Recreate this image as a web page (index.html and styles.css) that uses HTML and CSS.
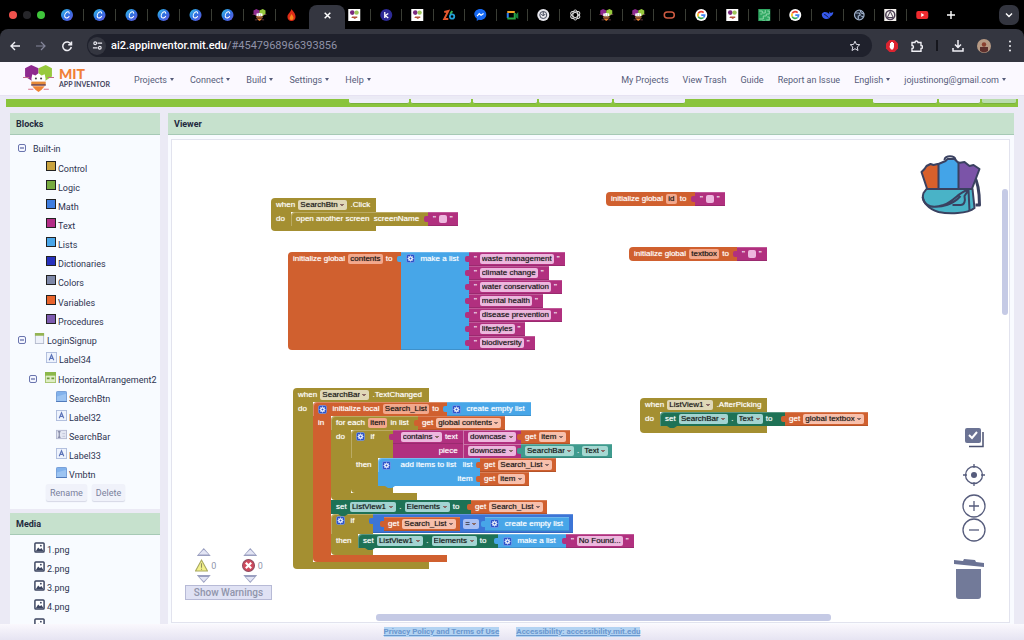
FILE: index.html
```html
<!DOCTYPE html>
<html lang="en">
<head>
<meta charset="utf-8">
<title>MIT App Inventor</title>
<link rel="stylesheet" href="styles.css">
</head>
<body>
<svg class="defs" aria-hidden="true">
  <defs>
    <linearGradient id="cg" x1="0" y1="0" x2="1" y2="1"><stop offset="0" stop-color="#38c6e8"/><stop offset=".5" stop-color="#2f6fe0"/><stop offset="1" stop-color="#6a5be0"/></linearGradient>
    <symbol id="canva" viewBox="0 0 12 12"><circle cx="6" cy="6" r="6" fill="url(#cg)"/><path d="M8.2 4.2C8.2 2.6 6.6 2.4 5.4 3.4 4 4.6 3.2 7 4.2 8.4 5.2 9.6 7.2 8.8 8 7.4" fill="none" stroke="#fff" stroke-width="1.1" stroke-linecap="round"/></symbol>
    <symbol id="bee" viewBox="0 0 30 26"><path d="M8 0l7 3v8l-7 4-6-4V3z" fill="#8e2a8f"/><path d="M22 0l6 3v8l-6 4-7-4V3z" fill="#97c93d"/><path d="M0 12h6M24 12h6" stroke="#c06a8a" stroke-width="1"/><path d="M9 9l3 1 3-2 3 2 3-1 1 5-3 2H11l-3-2z" fill="#fff"/><path d="M8 16h14v3H8z" fill="#e58a3a"/><path d="M8 18.500h14v1.500H8z" fill="#6b3f49"/><path d="M9 20.500h12L18 24l-3 2-3-2z" fill="#ee8434"/><path d="M5 23.500h5M25 23.500h-5" stroke="#d9738a" stroke-width="1"/><circle cx="12.500" cy="13" r="1" fill="#444"/><circle cx="17.500" cy="13" r="1" fill="#444"/></symbol>
    <symbol id="beesq" viewBox="0 0 12 12"><path d="M0 0h12v12H0z" fill="#fff"/><circle cx="4" cy="3.600" r="2.300" fill="#7b2a80"/><circle cx="8.300" cy="3.600" r="2.200" fill="#9fc65a"/><path d="M4 7.500h5v1.500H8L6.500 10 5 9H3z" fill="#b5533b"/></symbol>
    <symbol id="flame" viewBox="0 0 12 12"><path d="M6 0c1 2 4 4 4 7.500A4 4 0 0 1 6 12a4 4 0 0 1-4-4.500C2 5 5.500 3 6 0z" fill="#dd2c16"/><path d="M6 5c1 1.500 2 2.500 2 4a2 2 0 0 1-4 0z" fill="#f5891f"/></symbol>
    <symbol id="kk" viewBox="0 0 12 12"><circle cx="6" cy="6" r="6" fill="#2d2a96"/><path d="M4.500 3v6M8 4.500L5 6.500 8 9" fill="none" stroke="#fff" stroke-width="1.300"/></symbol>
    <symbol id="two6" viewBox="0 0 12 12"><path d="M1 3l4-1-4 8h4" fill="none" stroke="#e4572e" stroke-width="2"/><path d="M9 2L7 5" stroke="#37b35a" stroke-width="2"/><circle cx="8.800" cy="7.500" r="2.200" fill="none" stroke="#23a0d8" stroke-width="1.800"/></symbol>
    <symbol id="msgr" viewBox="0 0 12 12"><path d="M6 0c3.500 0 6 2.400 6 5.500S9.500 11 6 11l-1.500-.2L2.500 12V9.500A5.300 5.300 0 0 1 0 5.500C0 2.400 2.500 0 6 0z" fill="#1568f2"/><path d="M2.800 7.200L5 4.700l1.800 1.600 2.500-1.800" fill="none" stroke="#fff" stroke-width="1.200"/></symbol>
    <symbol id="meet" viewBox="0 0 12 12"><path d="M1.500 4v5" fill="none" stroke="#2f7ff0" stroke-width="2"/><path d="M1 3h7.500" fill="none" stroke="#f3a52a" stroke-width="2"/><path d="M1 9.500h7.500V4" fill="none" stroke="#28a745" stroke-width="2"/><path d="M9 6l3-3v7L9 8z" fill="#15803d"/></symbol>
    <symbol id="ring" viewBox="0 0 12 12"><circle cx="6" cy="6" r="6" fill="#e8e8ee"/><circle cx="6" cy="6" r="3.500" fill="none" stroke="#444a5c"/><path d="M6 2.500v4M4 5l2 2 2-2" stroke="#444a5c" fill="none"/></symbol>
    <symbol id="oai" viewBox="0 0 12 12"><g fill="none" stroke="#ddd" stroke-width="1"><ellipse cx="6" cy="6" rx="2.400" ry="5"/><ellipse cx="6" cy="6" rx="2.400" ry="5" transform="rotate(60 6 6)"/><ellipse cx="6" cy="6" rx="2.400" ry="5" transform="rotate(120 6 6)"/></g></symbol>
    <symbol id="orac" viewBox="0 0 12 12"><rect x="1" y="3" width="10" height="6" rx="3" fill="none" stroke="#cf5b42" stroke-width="1.500"/></symbol>
    <symbol id="goog" viewBox="0 0 12 12"><circle cx="6" cy="6" r="6" fill="#fff"/><g fill="none" stroke-width="1.600"><path d="M8.400 3.600A3.400 3.400 0 0 0 3 4.400" stroke="#ea4335"/><path d="M3 4.400a3.400 3.400 0 0 0 0 3.200" stroke="#fbbc05"/><path d="M3 7.600a3.400 3.400 0 0 0 5.300.9" stroke="#34a853"/><path d="M6 6.100h3.400a3.400 3.400 0 0 1-1.100 2.400" stroke="#4285f4"/></g></symbol>
    <symbol id="grn" viewBox="0 0 12 12"><path d="M0 0h12v12H0z" fill="#2fa862"/><path d="M1 2h3v2h3V1m2 1h2v3H8v2H5v3H1m1-5h2m5 3h2v3H8m-4 1h3" stroke="#8ed6a8" fill="none"/></symbol>
    <symbol id="whale" viewBox="0 0 12 12"><path d="M.5 5C.5 8 2.500 10 5.500 10c2 0 3-1 3.500-2.500C11 7 12 5 12 3L9.500 4 8 2.500V5C6 3 2.500 2 .5 5z" fill="#3558e8"/><path d="M3 5.500C5 6 6 7.500 7 8.500" stroke="#0a0f2a" fill="none"/></symbol>
    <symbol id="globe" viewBox="0 0 12 12"><circle cx="6" cy="6" r="4.800" fill="#1b2433" stroke="#9fb0c9" stroke-width="1.200"/><path d="M2 4h4l1 2-2 1v3M7 2l1 2 3 1M8 7l2 1" stroke="#9fb0c9" stroke-width="1.200" fill="none"/></symbol>
    <symbol id="tri" viewBox="0 0 12 12"><path d="M0 0h12v12H0z" fill="#f4f1ee"/><circle cx="6" cy="6" r="4.500" fill="none" stroke="#4a3d52" stroke-width="1.500"/><path d="M6 2.500L3 8.500h6z" fill="none" stroke="#4a3d52"/></symbol>
    <symbol id="yt" viewBox="0 0 12 12"><rect y="2" width="12" height="8" rx="2" fill="#ef2a2e"/><path d="M5 4l3 2-3 2z" fill="#fff"/></symbol>
    <symbol id="gear" viewBox="0 0 9 9"><rect x=".5" y=".5" width="8" height="8" rx="1.500" fill="#2a51c9" stroke="#7fa5f0" stroke-width=".6"/><circle cx="4.500" cy="4.500" r="1.700" fill="none" stroke="#fff" stroke-width="1.300"/><path d="M4.500 1.500v1M4.500 6.500v1M1.500 4.500h1M6.500 4.500h1M2.400 2.400l.7.700M5.900 5.900l.7.700M6.600 2.400l-.7.700M3.100 5.900l-.7.700" stroke="#fff" stroke-width=".8"/></symbol>
    <symbol id="minus" viewBox="0 0 8 8"><rect x=".5" y=".5" width="7" height="7" rx="1.500" fill="#f4f6ff" stroke="#6a75ae"/><path d="M2 4h4" stroke="#3d4a90"/></symbol>
    <symbol id="lab" viewBox="0 0 12 12"><rect x=".5" y=".5" width="11" height="11" fill="#eef3fd" stroke="#aebbdc"/><path d="M3.500 9L6 3l2.500 6M4.500 7h3" fill="none" stroke="#5a72b8" stroke-width="1.200"/></symbol>
    <symbol id="btn" viewBox="0 0 12 12"><rect x=".5" y=".5" width="11" height="10.500" rx="1" fill="#82b2ec" stroke="#6f98d4"/><path d="M1 11V6l10-3v8z" fill="#9cc4f2"/><path d="M0 11.500h12" stroke="#4471b5"/></symbol>
    <symbol id="tbx" viewBox="0 0 12 12"><rect x=".5" y="1.500" width="11" height="9" fill="#e3e6f2" stroke="#b3b8d0"/><path d="M2 3h3M3.500 3v6M2 9h3" stroke="#6b7090" fill="none"/><path d="M7 5h3M7 8h3" stroke="#c0c4d8"/></symbol>
    <symbol id="scr" viewBox="0 0 10 12"><rect x=".5" y="1" width="9" height="10.500" fill="#eef1fa" stroke="#b4bacc"/><path d="M0 0h10v3H0z" fill="#94b453"/></symbol>
    <symbol id="har" viewBox="0 0 12 12"><rect x=".5" y=".5" width="11" height="11" fill="#dfeec5" stroke="#a5c46c"/><path d="M0 0h12v4H0z" fill="#8cb84a"/><path d="M2 6h3v2H2zM7 6h3v2H7z" fill="#6f9a3a"/></symbol>
    <symbol id="pic" viewBox="0 0 12 12"><rect x="1" y="1" width="10" height="10" rx="1" fill="#fff" stroke="#3b4460" stroke-width="1.600"/><path d="M2 10l2.500-4 2 2L8 6.500 10.500 10z" fill="#3b4460"/><circle cx="7.500" cy="4" r="1" fill="#3b4460"/></symbol>
  </defs>
</svg>

<div class="browser">
  <div class="tabs">
    <div class="lights"><i class="red"></i><i class="dim"></i><i class="green"></i></div>
    <div class="pinned">
      <svg><use href="#canva"/></svg><svg><use href="#canva"/></svg><svg><use href="#canva"/></svg><svg><use href="#canva"/></svg><svg><use href="#canva"/></svg><svg><use href="#canva"/></svg><svg><use href="#bee"/></svg><svg><use href="#flame"/></svg>
    </div>
    <div class="active-tab"><button aria-label="Close tab"><svg viewBox="0 0 8 8"><path d="M1.500 1.500l5 5M6.500 1.500l-5 5" stroke="#fff" stroke-width="1.300"/></svg></button></div>
    <div class="others">
      <svg><use href="#beesq"/></svg><svg><use href="#kk"/></svg><svg><use href="#beesq"/></svg><svg><use href="#two6"/></svg><svg><use href="#msgr"/></svg><svg><use href="#meet"/></svg><svg><use href="#ring"/></svg><svg><use href="#oai"/></svg><svg><use href="#bee"/></svg><svg><use href="#bee"/></svg><svg><use href="#orac"/></svg><svg><use href="#goog"/></svg><svg><use href="#beesq"/></svg><svg><use href="#grn"/></svg><svg><use href="#goog"/></svg><svg><use href="#whale"/></svg><svg><use href="#globe"/></svg><svg><use href="#tri"/></svg><svg><use href="#yt"/></svg>
    </div>
    <button class="newtab" aria-label="New tab"><svg viewBox="0 0 10 10"><path d="M5 1v8M1 5h8" stroke="#fff" stroke-width="1.400"/></svg></button>
    <button class="chev" aria-label="Search tabs"><svg viewBox="0 0 10 10"><path d="M2 3.500l3 3 3-3" fill="none" stroke="#fff" stroke-width="1.400"/></svg></button>
  </div>
  <div class="toolbar">
    <button aria-label="Back"><svg viewBox="0 0 12 12"><path d="M11 6H2M6 2L2 6l4 4" fill="none" stroke="#f0f0f5" stroke-width="1.400"/></svg></button>
    <button aria-label="Forward"><svg viewBox="0 0 12 12"><path d="M1 6h9M6 2l4 4-4 4" fill="none" stroke="#84869a" stroke-width="1.200"/></svg></button>
    <button aria-label="Reload"><svg viewBox="0 0 12 12"><path d="M10 4.500A4.300 4.300 0 1 0 10.300 7M10.500 1.500v3.300H7.200" fill="none" stroke="#f0f0f5" stroke-width="1.500"/></svg></button>
    <div class="omnibox">
      <span class="tune"><svg viewBox="0 0 12 12"><g fill="none" stroke="#e8e8ee" stroke-width="1.300"><circle cx="3.500" cy="3.500" r="1.500"/><path d="M6 3.500h5M1 8.500h5"/><circle cx="8.500" cy="8.500" r="1.500"/></g></svg></span>
      <span class="url"><b>ai2.appinventor.mit.edu</b>/#4547968966393856</span>
      <button aria-label="Bookmark"><svg viewBox="0 0 12 12"><path d="M6 1.200l1.400 3.200 3.400.3-2.600 2.300.8 3.500L6 8.700l-3 1.800.8-3.500L1.200 4.700l3.400-.3z" fill="none" stroke="#dcdce6" stroke-width="1"/></svg></button>
    </div>
    <button aria-label="Ad blocker"><svg viewBox="0 0 12 12"><path d="M3.500 0h5L12 3.500v5L8.500 12h-5L0 8.500v-5z" fill="#dc2430"/><path d="M4 5v-2h1v-1h2v1h1v4L7 9.500H5L3.500 7z" fill="#fff"/></svg></button>
    <button aria-label="Extensions"><svg viewBox="0 0 12 12"><path d="M1 2.500h3a1.500 1.500 0 0 1 3 0h3v3a1.500 1.500 0 0 1 0 3v2.700H1V8.500a1.500 1.500 0 0 0 0-3z" fill="none" stroke="#f0f0f5" stroke-width="1.400"/></svg></button>
    <i class="sep"></i>
    <button aria-label="Downloads"><svg viewBox="0 0 12 12"><path d="M6 0v7M3 4.500l3 3 3-3M1 8v3h10V8" fill="none" stroke="#f0f0f5" stroke-width="1.500"/></svg></button>
    <button aria-label="Profile"><svg class="big" viewBox="0 0 14 14"><circle cx="7" cy="7" r="7" fill="#b79a84"/><path d="M3 8h8v4a7 7 0 0 1-8 0z" fill="#5d2f2c"/><circle cx="7" cy="5.500" r="2.200" fill="#8a4030"/></svg></button>
    <button aria-label="Menu"><svg viewBox="0 0 12 12"><g fill="#f0f0f5"><circle cx="6" cy="1.500" r="1"/><circle cx="6" cy="6" r="1"/><circle cx="6" cy="10.500" r="1"/></g></svg></button>
  </div>
</div>

<header class="top">
  <a class="logo" href="#"><svg><use href="#bee"/></svg><span><b>MIT</b><small>APP INVENTOR</small></span></a>
  <nav class="menu">
    <button class="dd">Projects</button><button class="dd">Connect</button><button class="dd">Build</button><button class="dd">Settings</button><button class="dd">Help</button>
  </nav>
  <nav class="links">
    <a href="#">My Projects</a><a href="#">View Trash</a><a href="#">Guide</a><a href="#">Report an Issue</a><button class="dd">English</button><button class="dd">jojustinong@gmail.com</button>
  </nav>
</header>

<div class="greenbar">
  <div class="seg left"><i class="s60"></i><i class="s60"></i><i class="s64"></i><i class="s73"></i><i class="s70"></i></div>
  <div class="seg"><i class="s64"></i><i class="s40"></i><i class="s34 on"></i></div>
</div>

<main>
  <aside>
    <section class="panel">
      <h2>Blocks</h2>
      <ul class="tree">
        <li class="l0 root"><svg class="tog"><use href="#minus"/></svg><span class="plain">Built-in</span></li>
        <li class="l1 first"><i class="sw" style="background:#c9a33f"></i><span>Control</span></li>
        <li class="l1"><i class="sw" style="background:#77ab41"></i><span>Logic</span></li>
        <li class="l1"><i class="sw" style="background:#3f7de0"></i><span>Math</span></li>
        <li class="l1"><i class="sw" style="background:#b32d87"></i><span>Text</span></li>
        <li class="l1"><i class="sw" style="background:#49a6e9"></i><span>Lists</span></li>
        <li class="l1"><i class="sw" style="background:#2630bd"></i><span>Dictionaries</span></li>
        <li class="l1"><i class="sw" style="background:#7e88a8"></i><span>Colors</span></li>
        <li class="l1 first"><i class="sw" style="background:#e8642c"></i><span>Variables</span></li>
        <li class="l1"><i class="sw" style="background:#7d5bb0"></i><span>Procedures</span></li>
        <li class="l0"><svg class="tog"><use href="#minus"/></svg><svg class="ic"><use href="#scr"/></svg><span>LoginSignup</span></li>
        <li class="l1"><svg class="ic"><use href="#lab"/></svg><span>Label34</span></li>
        <li class="lh first"><svg class="tog"><use href="#minus"/></svg><svg class="ic"><use href="#har"/></svg><span>HorizontalArrangement2</span></li>
        <li class="l2"><svg class="ic"><use href="#btn"/></svg><span>SearchBtn</span></li>
        <li class="l2"><svg class="ic"><use href="#lab"/></svg><span>Label32</span></li>
        <li class="l2"><svg class="ic"><use href="#tbx"/></svg><span>SearchBar</span></li>
        <li class="l2"><svg class="ic"><use href="#lab"/></svg><span>Label33</span></li>
        <li class="l2"><svg class="ic"><use href="#btn"/></svg><span>Vmbtn</span></li>
      </ul>
      <div class="acts"><button>Rename</button><button>Delete</button></div>
    </section>
    <section class="panel media">
      <h2>Media</h2>
      <ul class="tree">
        <li><svg class="ic"><use href="#pic"/></svg><span>1.png</span></li>
        <li><svg class="ic"><use href="#pic"/></svg><span>2.png</span></li>
        <li><svg class="ic"><use href="#pic"/></svg><span>3.png</span></li>
        <li><svg class="ic"><use href="#pic"/></svg><span>4.png</span></li>
        <li><svg class="ic"><use href="#pic"/></svg></li>
      </ul>
    </section>
  </aside>

  <section class="viewer">
    <h2>Viewer</h2>
    <div class="canvas">

      <div class="stack short" style="left:99px;top:58px;--w:105px">
        <div class="cell event head">when <select aria-label="Component"><option>SearchBtn</option></select> .Click</div>
        <div class="line"><div class="arm event w20">do</div>
          <div class="cell event nest" style="--w:137px">open another screen&nbsp; screenName</div>
          <div class="cell text val empty">"<input aria-label="Screen name">"</div></div>
        <div class="foot event"></div>
      </div>

      <div class="stack one" style="left:116px;top:112px">
        <div class="line"><div class="cell vars tall round" style="--w:113px">initialize global <input class="name" aria-label="Name" value="contents"> to</div>
          <div class="cell lists tall val" style="--w:68px"><svg class="gear"><use href="#gear"/></svg>  make a list</div>
          <div class="col">
            <div class="cell text val">"<input aria-label="Text" value="waste management">"</div>
            <div class="cell text val">"<input aria-label="Text" value="climate change">"</div>
            <div class="cell text val">"<input aria-label="Text" value="water conservation">"</div>
            <div class="cell text val">"<input aria-label="Text" value="mental health">"</div>
            <div class="cell text val">"<input aria-label="Text" value="disease prevention">"</div>
            <div class="cell text val">"<input aria-label="Text" value="lifestyles">"</div>
            <div class="cell text val">"<input aria-label="Text" value="biodiversity">"</div>
          </div></div>
      </div>

      <div class="stack one" style="left:434px;top:52px">
        <div class="line"><div class="cell vars round" style="--w:89px">initialize global <input class="name" aria-label="Name" value="id"> to</div><div class="cell text val empty">"<input aria-label="Text">"</div></div>
      </div>

      <div class="stack one" style="left:457px;top:107px">
        <div class="line"><div class="cell vars round" style="--w:108px">initialize global <input class="name" aria-label="Name" value="textbox"> to</div><div class="cell text val empty">"<input aria-label="Text">"</div></div>
      </div>

      <div class="stack" style="left:121px;top:248px;--w:136px">
        <div class="cell event head">when <select aria-label="Component"><option>SearchBar</option></select> .TextChanged</div>
        <div class="line"><div class="arm event w20">do</div>
          <div class="sub" style="--w:134px">
            <div class="line"><div class="cell vars nest" style="--w:134px"><svg class="gear"><use href="#gear"/></svg>  initialize local <input class="name" aria-label="Name" value="Search_List"> to</div><div class="cell lists val" style="--w:84px"><svg class="gear"><use href="#gear"/></svg>  create empty list</div></div>
            <div class="line"><div class="arm vars w18">in</div>
              <div class="col">
                <div class="sub" style="--w:86px">
                  <div class="line"><div class="cell event nest" style="--w:87px">for each <input class="name" aria-label="Name" value="item"> in list</div><div class="cell vars val">get <select aria-label="Variable"><option>global contents</option></select></div></div>
                  <div class="line"><div class="arm event w20">do</div>
                    <div class="sub" style="--w:42px">
                      <div class="line"><div class="cell event nest tall" style="--w:42px"><svg class="gear"><use href="#gear"/></svg>  if</div>
                        <div class="col">
                          <div class="line"><div class="cell text right val" style="--w:70px"><select aria-label="Operation"><option>contains</option></select> text </div><div class="cell text val edge" style="--w:58px"><select aria-label="Case"><option>downcase</option></select></div><div class="cell vars val">get <select aria-label="Variable"><option>item</option></select></div></div>
                          <div class="line"><div class="cell text right" style="--w:70px">piece </div><div class="cell text val edge" style="--w:58px"><select aria-label="Case"><option>downcase</option></select></div><div class="cell getter val"><select aria-label="Component"><option>SearchBar</option></select>.<select aria-label="Property"><option>Text</option></select></div></div>
                        </div></div>
                      <div class="line"><div class="arm event w27">then</div>
                        <div class="col notch lists-n">
                          <div class="line"><div class="cell lists right nest" style="--w:102px"><svg class="gear"><use href="#gear"/></svg>add items to list &nbsp; list  </div><div class="cell vars val">get <select aria-label="Variable"><option>Search_List</option></select></div></div>
                          <div class="line"><div class="cell lists right" style="--w:102px">item  </div><div class="cell vars val">get <select aria-label="Variable"><option>item</option></select></div></div>
                        </div></div>
                      <div class="foot event"></div>
                    </div></div>
                  <div class="foot event"></div>
                </div>
                <div class="line"><div class="cell set notch" style="--w:140px">set <select aria-label="Component"><option>ListView1</option></select> . <select aria-label="Property"><option>Elements</option></select> to</div><div class="cell vars val">get <select aria-label="Variable"><option>Search_List</option></select></div></div>
                <div class="sub" style="--w:42px">
                  <div class="line"><div class="cell event nest tall" style="--w:42px"><svg class="gear"><use href="#gear"/></svg>  if</div>
                    <div class="math val compare"><div class="cell vars val">get <select aria-label="Variable"><option>Search_List</option></select></div><select aria-label="Comparison"><option>=</option></select><div class="cell lists val" style="--w:84px"><svg class="gear"><use href="#gear"/></svg>  create empty list</div></div></div>
                  <div class="line"><div class="arm event w27">then</div>
                    <div class="cell set nest notch" style="--w:140px">set <select aria-label="Component"><option>ListView1</option></select> . <select aria-label="Property"><option>Elements</option></select> to</div><div class="cell lists val" style="--w:68px"><svg class="gear"><use href="#gear"/></svg>  make a list</div><div class="cell text val">"<input aria-label="Text" value="No Found...">"</div></div>
                  <div class="foot event"></div>
                </div>
              </div></div>
            <div class="foot vars"></div>
          </div></div>
        <div class="foot event"></div>
      </div>

      <div class="stack" style="left:468px;top:258px;--w:127px">
        <div class="cell event head">when <select aria-label="Component"><option>ListView1</option></select> .AfterPicking</div>
        <div class="line"><div class="arm event w20">do</div>
          <div class="cell set nest notch" style="--w:125px">set <select aria-label="Component"><option>SearchBar</option></select> . <select aria-label="Property"><option>Text</option></select> to</div>
          <div class="cell vars val">get <select aria-label="Variable"><option>global textbox</option></select></div></div>
        <div class="foot event"></div>
      </div>

      <svg class="backpack" viewBox="0 0 62 60" fill="none" stroke="#3a4160" stroke-width="2" stroke-linejoin="round">
        <path d="M53 20c4 6 6 16 6 30h-4" stroke-width="3"/>
        <path d="M24 5c0-5 11-5 11 0"/>
        <path d="M1 17l3-3 2-3 4-2 3 1 4-1 4 2v24H7z" fill="#d8602c"/>
        <path d="M18 9l7-3 2-2h7l3 3 2 1v27H18z" fill="#43a4e8"/>
        <path d="M38 8l6-1 5 4 4-1 6 4-3 8-5 13H38z" fill="#7b54a8"/>
        <path d="M6 34h46l2 19c-7 6-26 6-36 4C8 54 0 46 3 38z" fill="#49b3c7"/>
        <path d="M2 42c2 11 12 11 21 8 11-4 14-12 24-15M8 51c14 3 26-3 32-10M32 50h8c4 0 5-4 4-9l4-6M48 35l1 21"/>
      </svg>

      <div class="warn">
        <div class="cnt">
          <button class="up" aria-label="Previous warning"></button>
          <span><svg viewBox="0 0 12 12"><path d="M6 1L11.500 11H.5z" fill="#f3f08a" stroke="#a8a860"/><path d="M6 4v4M6 9v1" stroke="#8f9060"/></svg>0</span>
          <button class="down" aria-label="Next warning"></button>
        </div>
        <div class="cnt">
          <button class="up" aria-label="Previous error"></button>
          <span><svg viewBox="0 0 12 12"><circle cx="6" cy="6" r="5.500" fill="#cf4a5c" stroke="#8e4a60"/><path d="M3.500 3.500l5 5M8.500 3.500l-5 5" stroke="#fff" stroke-width="2"/></svg>0</span>
          <button class="down" aria-label="Next error"></button>
        </div>
        <button class="show">Show Warnings</button>
      </div>

      <div class="tools">
        <button class="sel" aria-label="Select blocks"><svg viewBox="0 0 20 20"><rect width="16" height="15" x="1" rx="2" fill="#6b7394"/><path d="M5 7l3 3 5-6" fill="none" stroke="#fff" stroke-width="2"/><path d="M5 18.500h14V4" fill="none" stroke="#4a5070" stroke-width="1.500"/></svg></button>
        <button class="tgt" aria-label="Center"><svg viewBox="0 0 22 22"><g fill="none" stroke="#565c7c" stroke-width="1.300"><circle cx="11" cy="11" r="8.500"/><path d="M11 0v4M11 18v4M0 11h4M18 11h4"/></g><circle cx="11" cy="11" r="3" fill="#565c7c"/></svg></button>
        <button aria-label="Zoom in"><svg viewBox="0 0 24 24"><g fill="none" stroke="#565c7c" stroke-width="1.300"><circle cx="12" cy="12" r="11"/><path d="M12 7v10M7 12h10"/></g></svg></button>
        <button aria-label="Zoom out"><svg viewBox="0 0 24 24"><g fill="none" stroke="#565c7c" stroke-width="1.300"><circle cx="12" cy="12" r="11"/><path d="M7 12h10"/></g></svg></button>
        <button class="trash" aria-label="Trash"><svg viewBox="0 0 30 40"><path d="M0 1l9 1 1-2 11 1 1 2 8 1v4L0 5z" fill="#6b7394"/><path d="M2 10h25v27a3 3 0 0 1-3 3H5a3 3 0 0 1-3-3z" fill="#727a99"/></svg></button>
      </div>
      <i class="vbar"></i><i class="hbar"></i>
    </div>
  </section>
</main>
<footer><a href="#">Privacy Policy and Terms of Use</a><a href="#">Accessibility: accessibility.mit.edu</a></footer>
</body>
</html>
```
FILE: styles.css
```css
* { box-sizing: border-box; }
body { margin: 0; height: 100vh; display: flex; flex-direction: column; overflow: hidden; background: #ebeaf5; font-family: Roboto, sans-serif; font-size: 9px; color: #2d3350; }
button { border: 0; padding: 0; background: none; font: inherit; color: inherit; display: flex; align-items: center; justify-content: center; }
a { color: inherit; text-decoration: none; }
ul { list-style: none; margin: 0; padding: 0; }
h2 { margin: 0; }
.defs { position: absolute; width: 0; height: 0; }

.browser { flex: none; background: #000; }
.tabs { height: 29px; display: flex; align-items: center; padding-right: 5px; }
.tabs > * { flex: none; }
.lights { width: 51px; padding-left: 9px; display: flex; gap: 6px; }
.lights i { width: 8px; height: 8px; border-radius: 50%; }
.red { background: #f0524d; }
.dim { background: #26262a; }
.green { background: #3fc53b; }
.pinned { display: flex; }
.pinned svg { width: 32px; height: 12px; }
.pinned svg + svg, .others svg + svg { border-left: 1px solid #3a3d35; }
.active-tab { align-self: stretch; width: 36px; margin: 5px 0 0 2px; display: flex; align-items: center; justify-content: center; background: #343640; border-radius: 8px 8px 0 0; }
.active-tab svg { width: 9px; height: 9px; margin-bottom: 4px; }
.tabs .others { flex: 1; min-width: 0; display: flex; margin-left: -6px; }
.others svg { flex: 1; width: 0; min-width: 0; height: 12px; }
.newtab { width: 28px; }
.newtab svg, .chev svg { width: 10px; height: 10px; }
.chev { width: 20px; height: 20px; margin-left: 34px; border-radius: 7px; background: #33353f; }
.toolbar { height: 33px; display: flex; align-items: center; gap: 14px; padding: 0 9px 0 9px; background: #343640; border-radius: 8px 8px 0 0; }
.toolbar svg { width: 12px; height: 12px; }
.toolbar .big { width: 14px; height: 14px; }
.omnibox { flex: 1; height: 23px; display: flex; align-items: center; border-radius: 12px; background: #1f212c; padding: 0 11px 0 1px; color: #8f92a8; font-size: 11px; }
.tune { width: 18px; height: 18px; border-radius: 50%; background: #343640; display: flex; align-items: center; justify-content: center; margin-right: 5px; }
.tune svg { width: 11px; height: 11px; }
.url { flex: 1; }
.url b { font-weight: 500; color: #fff; }
.omnibox ~ button { margin-right: -1px; }
.sep { width: 2px; height: 11px; background: #15161d; }

.top { flex: none; height: 34px; display: flex; align-items: center; background: #fbf9ff; border-bottom: 1px solid #e6e2f2; padding: 0 18px 0 23px; color: #565c7a; }
.logo { display: flex; align-items: center; gap: 5px; }
.logo svg { width: 31px; height: 27px; }
.logo b { display: block; font: 900 14px/12px Lato, sans-serif; color: #f08036; }
.logo small { display: block; font: 700 7px/9px Lato, sans-serif; color: #45455e; }
.menu { display: flex; gap: 16px; margin-left: 24px; padding-top: 2px; flex: 1; }
.links { display: flex; gap: 14px; align-items: center; padding-top: 2px; }
.dd::after { content: ""; margin-left: 3px; border: 2px solid transparent; border-top: 3px solid currentColor; border-bottom: 0; }

.greenbar { flex: none; height: 8px; margin: 3px 6px 6px; background: #8ac43c; display: flex; justify-content: space-between; padding: 0 2px 0 343px; }
.seg { display: flex; gap: 2px; }
.seg i { height: 5px; background: #eeeef8; border-bottom: 1px solid #79b23c; border-radius: 0 0 2px 2px; }
.seg .on { background: #b9dcae; }
.s60 { width: 60px; } .s64 { width: 64px; } .s73 { width: 73px; } .s70 { width: 71px; } .s40 { width: 41px; } .s34 { width: 34px; }

main { flex: 1; min-height: 0; display: flex; gap: 8px; padding: 0 10px; }
aside { width: 150px; display: flex; flex-direction: column; gap: 4px; }
.panel { background: #f8fbff; }
.media { flex: 1; min-height: 0; overflow: hidden; }
h2 { height: 22px; padding-left: 6px; font-size: 9px; line-height: 22px; font-weight: 700; background: #c6e1cd; border-bottom: 1px solid #a6c9b5; color: #1f2a3d; }
.panel > .tree { padding: 4px 0 1px; }
.tree li { height: 19px; display: flex; align-items: center; gap: 2px; white-space: nowrap; }
.tree li.first { margin-top: 1px; }
.tree span { padding-top: 3px; }
.tree .plain { padding: 1px 0 0 5px; }
.tree .root { height: 18px; }
.l0 { padding-left: 8px; }
.l0 .ic { margin-left: 6px; }
.l1 { padding-left: 36px; }
.lh { padding-left: 19px; }
.lh .ic { margin-left: 6px; }
.l2 { padding-left: 46px; }
.tog { width: 8px; height: 8px; }
.ic { width: 11px; height: 11px; margin-top: -3px; }
.sw { width: 10px; height: 10px; margin-top: -3px; border: 1px solid #222; }
.acts { display: flex; gap: 5px; padding: 0 0 8px 36px; }
.acts button { height: 17px; padding: 0 4px; background: #f0f2fa; border-radius: 2px; box-shadow: 0 1px 1px #d5d8e6; color: #7a819c; }
.panel.media > .tree { padding-top: 4px; }
.media li { padding-left: 24px; }

.viewer { flex: 1; min-width: 0; display: flex; flex-direction: column; background: #f9fbff; }
.canvas { flex: 1; position: relative; overflow: hidden; margin: 4px 4px 1px 3px; background: #fff; border: 1px solid #e2e3ee; font-family: "Liberation Sans", sans-serif; font-size: 8px; }

.stack { position: absolute; color: #fff; white-space: pre; line-height: 10px; text-shadow: 0 0 1px #ffffffb0; }
.stack, .sub, .col { display: flex; flex-direction: column; align-items: flex-start; }
.line { display: flex; }
.cell { position: relative; width: var(--w); height: 14px; display: flex; align-items: center; gap: 1px; padding: 0 5px; white-space: pre; }
.line > .cell { flex: none; }
.stack .val.cell:not([style]) { width: auto; }
.head { border-radius: 4px 0 0 0; }
.round { border-radius: 4px 0 0 4px; }
.tall { height: auto; min-height: 14px; align-items: flex-start; padding-top: 2px; }
.arm { padding: 2px 0 0 5px; }
.w18 { width: 18px; } .w20 { width: 20px; } .w27 { width: 27px; }
.foot { width: var(--w); height: 7px; border-radius: 0 0 0 4px; }
.short > .foot { height: 5px; }
.nest { box-shadow: inset 1px 1px 0 #ffffff40; border-radius: 4px 0 0 0; }
.right { justify-content: flex-end; padding: 0 3px 0 4px; }
.right .gear { margin-right: auto; }
.val { position: relative; box-shadow: inset 0 1px 0 #ffffff33, inset 0 -1px 0 #00000020; }
.val::before { content: ""; position: absolute; left: -4px; top: 4px; width: 4px; height: 6px; background: inherit; border-radius: 2px 0 0 2px; }
.edge { box-shadow: inset 1px 1px 0 #ffffff55; }
.event { background: #a48f31; --f: #e0d8b8; }
.vars { background: #d0602f; --f: #f8c0ac; }
.vars.val { padding: 0 4px; }
.lists { background: #47a6e8; }
.text { background: #b1307f; --f: #edb8de; }
.set { background: #1e7256; --f: #a3d4d2; }
.getter { background: #3f9b8e; --f: #a5d8d2; }
.getter.val { padding: 0 4px; gap: 3px; }
.math { background: #3c75d6; --f: #a8bff4; }
.cell.text { gap: 3px; }
.cell.text.right { gap: 1px; }
.notch { position: relative; }
.notch::after { content: ""; position: absolute; left: 7px; bottom: -2px; width: 10px; height: 2px; background: inherit; clip-path: polygon(0 0, 100% 0, 70% 100%, 30% 100%); z-index: 1; }
.lists-n::after { background: #47a6e8; }
.compare { display: flex; align-items: center; gap: 3px; height: 19px; margin-bottom: 1px; padding: 0 4px 0 11px; }
.stack select, .stack input { border: 0; height: 10px; padding: 0 2px; margin: 0; border-radius: 2px; background: var(--f); font: inherit; line-height: 10px; color: #111; text-shadow: 0 0 1px #11111180; }
.stack select { appearance: none; padding-right: 9px; background: linear-gradient(#8a6a66, #8a6a66) right 3px top 4px / 4px 1px no-repeat, linear-gradient(#8a6a66, #8a6a66) right 4px top 5px / 2px 1px no-repeat, var(--f); }
.stack .compare > select { margin-right: 3px; }
.stack input { field-sizing: content; }
.stack .name { background: #f3a88c; }
.stack .empty input { width: 8px; height: 8px; }
.gear { width: 9px; height: 9px; flex: none; }

.backpack { position: absolute; right: 26px; top: 15px; width: 63px; height: 60px; }
.warn { position: absolute; left: 13px; bottom: 22px; width: 87px; display: grid; grid-template-columns: 1fr 1fr; row-gap: 2px; color: #9095ab; }
.cnt { display: flex; flex-direction: column; align-items: center; gap: 3px; padding-right: 6px; font: 9px Roboto, sans-serif; }
.cnt + .cnt { padding-right: 0; }
.cnt span { display: flex; align-items: center; gap: 3px; margin-left: 4px; }
.cnt svg { width: 13px; height: 13px; }
.up, .down { width: 14px; height: 8px; background: #9a9fc0; clip-path: polygon(50% 0, 100% 100%, 0 100%); }
.down { clip-path: polygon(0 0, 100% 0, 50% 100%); }
.up::after, .down::after { content: ""; width: 10px; height: 5px; background: #e3e5f4; clip-path: polygon(50% 0, 100% 100%, 0 100%); }
.down::after { clip-path: polygon(0 0, 100% 0, 50% 100%); }
.show { grid-column: span 2; height: 15px; border: 1px solid #b7bad6; background: #e0e2f4; font: 500 10px Roboto, sans-serif; }
.tools { position: absolute; right: 23px; bottom: 23px; display: flex; flex-direction: column; align-items: flex-end; }
.tools svg { display: block; width: 24px; height: 24px; }
.tools .sel { margin-right: 2px; }
.tools .sel svg { width: 20px; height: 20px; }
.tools .tgt { margin: 16px 1px 8px 0; }
.tools .tgt svg { width: 22px; height: 22px; }
.tools .trash { margin: 17px 2px 0 0; }
.tools .trash svg { width: 30px; height: 40px; }
.vbar { position: absolute; right: 1px; top: 49px; width: 6px; height: 126px; border-radius: 3px; background: #c5cae5; }
.hbar { position: absolute; left: 204px; bottom: 1px; width: 455px; height: 7px; border-radius: 3px; background: #c5cae5; }

footer { flex: none; height: 16px; display: flex; justify-content: center; gap: 17px; background: linear-gradient(#faf8fd, #e6e4f2); font: 700 8px/10px Roboto, sans-serif; padding-top: 3px; color: #6b98cf; }
footer a { height: 10px; background: #b3d3f2; text-decoration: underline; }
```
